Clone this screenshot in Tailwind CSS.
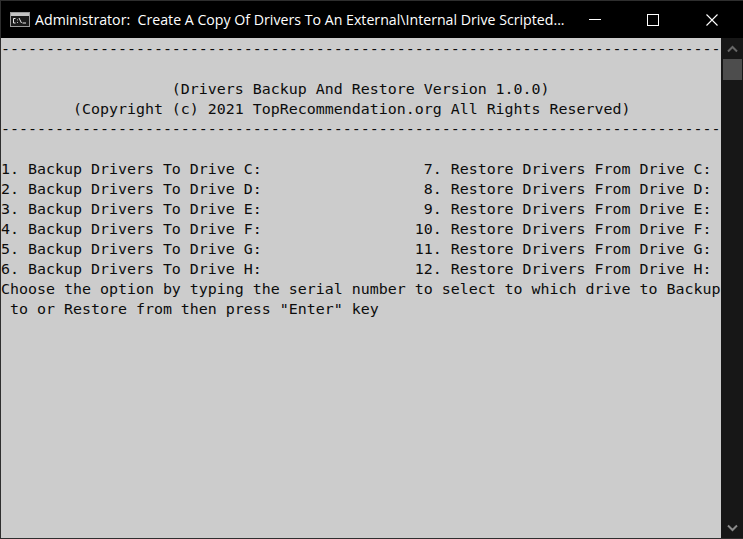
<!DOCTYPE html>
<html lang="en">
  <head>
    <meta charset="UTF-8" />
    <script src="https://cdn.jsdelivr.net/npm/@tailwindcss/browser@4"></script>
    <title>Administrator: Create A Copy Of Drivers</title>
  </head>
  <body class="w-[743px] h-[539px] overflow-hidden bg-black">
    <div class="w-full h-full flex flex-col border-t border-b border-l border-[#2e2e2e]">
      <header class="h-[37px] shrink-0 flex items-center bg-black text-white">
        <svg class="ml-[9px] w-5 h-[15px]" viewBox="0 0 20 15" fill="none">
          <rect x="0.5" y="0.5" width="19" height="14" fill="#1a1a1a" stroke="#9a9a9a" />
          <rect x="1" y="1" width="18" height="3" fill="#c4c4c4" />
          <path d="M5.5 6.5H3.5V11H5.5M7.5 7.5v.8M7.5 10v.8M9 6l2.5 5M12.5 11H16" stroke="#e8e8e8" stroke-width="1" />
        </svg>
        <h1 class="ml-[5px] font-['Open_Sans',sans-serif] text-[14.18px] whitespace-pre">Administrator:  Create A Copy Of Drivers To An External\Internal Drive Scripted...</h1>
        <div class="ml-auto flex items-center h-full">
          <svg class="w-3 h-3 mr-[46px] -mt-px" viewBox="0 0 12 12"><path d="M0 6.5H12" stroke="#fff" /></svg>
          <svg class="w-3 h-3 mr-[47px]" viewBox="0 0 12 12" fill="none"><rect x="0.5" y="0.5" width="11" height="11" stroke="#fff" /></svg>
          <svg class="w-3 h-3 mr-[25px]" viewBox="0 0 12 12"><path d="M0.5 0.5L11.5 11.5M11.5 0.5L0.5 11.5" stroke="#fff" stroke-width="1.1" /></svg>
        </div>
      </header>
      <div class="flex flex-1 min-h-0">
        <pre class="flex-1 pt-px bg-[#cccccc] text-[#0c0c0c] font-['DejaVu_Sans_Mono',monospace] text-[14.95px] leading-[20px] overflow-hidden">--------------------------------------------------------------------------------

                   (Drivers Backup And Restore Version 1.0.0)
        (Copyright (c) 2021 TopRecommendation.org All Rights Reserved)
--------------------------------------------------------------------------------

1. Backup Drivers To Drive C:                  7. Restore Drivers From Drive C:
2. Backup Drivers To Drive D:                  8. Restore Drivers From Drive D:
3. Backup Drivers To Drive E:                  9. Restore Drivers From Drive E:
4. Backup Drivers To Drive F:                 10. Restore Drivers From Drive F:
5. Backup Drivers To Drive G:                 11. Restore Drivers From Drive G:
6. Backup Drivers To Drive H:                 12. Restore Drivers From Drive H:
Choose the option by typing the serial number to select to which drive to Backup
 to or Restore from then press "Enter" key</pre>
        <aside class="w-[22px] shrink-0 flex flex-col items-center bg-[#171717]">
          <svg class="mt-[7px] w-[11px] h-[8px]" viewBox="0 0 11 8" fill="none"><path d="M1 6.5L5.5 2L10 6.5" stroke="#666" stroke-width="2" /></svg>
          <div class="mt-[6px] w-[19px] h-[21px] bg-[#4d4d4d]"></div>
          <svg class="mt-auto mb-[6px] w-[11px] h-[8px]" viewBox="0 0 11 8" fill="none"><path d="M1 1.5L5.5 6L10 1.5" stroke="#8a8a8a" stroke-width="2" /></svg>
        </aside>
      </div>
    </div>
  </body>
</html>
